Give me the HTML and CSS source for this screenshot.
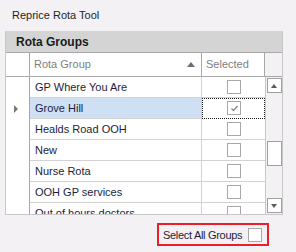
FILE: index.html
```html
<!DOCTYPE html>
<html lang="en">
<head>
    <meta charset="UTF-8">
    <title>Reprice Rota Tool</title>
    <link rel="stylesheet" href="styles.css">
</head>
<body>
    <div class="title">Reprice Rota Tool</div>

    <div class="panel">
        <div class="panel-head">Rota Groups</div>
        <div class="grid">
            <div class="grid-header">
                <div class="ind"></div>
                <div class="col-name">Rota Group<span class="sort"></span></div>
                <div class="col-sel">Selected</div>
                <div class="col-corner"></div>
            </div>
            <div class="grid-body">
                <div class="rows">
                    <div class="row">
                        <div class="ind"></div>
                        <div class="col-name">GP Where You Are</div>
                        <div class="col-sel"><span class="check"></span></div>
                    </div>
                    <div class="row current">
                        <div class="ind"><span class="arrow"></span></div>
                        <div class="col-name">Grove Hill</div>
                        <div class="col-sel focus"><span class="check on"><svg width="11" height="11" viewBox="0 0 11 11"><path d="M2.5 5.5 L4.5 7.5 L8.5 3" fill="none" stroke="#8a8a8a" stroke-width="1.4"/></svg></span></div>
                    </div>
                    <div class="row">
                        <div class="ind"></div>
                        <div class="col-name">Healds Road OOH</div>
                        <div class="col-sel"><span class="check"></span></div>
                    </div>
                    <div class="row">
                        <div class="ind"></div>
                        <div class="col-name">New</div>
                        <div class="col-sel"><span class="check"></span></div>
                    </div>
                    <div class="row">
                        <div class="ind"></div>
                        <div class="col-name">Nurse Rota</div>
                        <div class="col-sel"><span class="check"></span></div>
                    </div>
                    <div class="row">
                        <div class="ind"></div>
                        <div class="col-name">OOH GP services</div>
                        <div class="col-sel"><span class="check"></span></div>
                    </div>
                    <div class="row">
                        <div class="ind"></div>
                        <div class="col-name">Out of hours doctors</div>
                        <div class="col-sel"><span class="check"></span></div>
                    </div>
                </div>
                <div class="scrollbar">
                    <div class="sb-btn"><span class="tri-up"></span></div>
                    <div class="sb-track">
                        <div class="sb-thumb"></div>
                    </div>
                    <div class="sb-btn"><span class="tri-down"></span></div>
                </div>
            </div>
        </div>
    </div>

    <div class="footer">
        <div class="select-all">
            <span class="select-label">Select All Groups</span>
            <span class="check"></span>
        </div>
    </div>
</body>
</html>
```

FILE: styles.css
```css
* {
    box-sizing: border-box;
}
body {
    margin: 0;
    background: #f4f1f5;
    font-family: "Liberation Sans", Arial, sans-serif;
    font-size: 11px;
    color: #1e1e2e;
    width: 296px;
    height: 252px;
    overflow: hidden;
}
.title {
    height: 31px;
    line-height: 30px;
    padding-left: 12px;
    color: #1e1e1e;
}
.panel {
    margin-left: 5px;
    width: 278px;
    height: 184px;
    border: 1px solid #c8c8c8;
    border-top: none;
    display: flex;
    flex-direction: column;
    overflow: hidden;
}
.panel-head {
    height: 22px;
    line-height: 22px;
    background: #d4d4d4;
    font-weight: bold;
    font-size: 12px;
    padding-left: 10px;
    color: #1a1a1a;
    border-bottom: 1px solid #a8a8a8;
}
.grid {
    flex: 1;
    display: flex;
    flex-direction: column;
    background: #fff;
    min-height: 0;
}
.grid-header {
    display: flex;
    height: 24px;
    border-bottom: 1px solid #a8a8a8;
    color: #808080;
}
.grid-header > div {
    line-height: 22px;
}
.ind {
    width: 24px;
    flex: none;
    border-right: 1px solid #a8a8a8;
    background: #fff;
    display: flex;
    align-items: center;
    justify-content: center;
}
.col-name {
    width: 172px;
    flex: none;
    padding-left: 4px;
    border-right: 1px solid #c8c8c8;
    position: relative;
    white-space: nowrap;
}
.grid-header .col-name {
    border-right-color: #a8a8a8;
}
.col-sel {
    width: 63px;
    flex: none;
    padding-left: 4px;
    border-right: 1px solid #a8a8a8;
}
.col-corner {
    flex: 1;
    background: #f4f1f5;
}
.sort {
    position: absolute;
    right: 6px;
    top: 9px;
    border-left: 4px solid transparent;
    border-right: 4px solid transparent;
    border-bottom: 5px solid #6e6e6e;
}
.grid-body {
    flex: 1;
    display: flex;
    min-height: 0;
}
.rows {
    width: 259px;
    overflow: hidden;
}
.row {
    display: flex;
    height: 21px;
}
.row .col-name {
    border-bottom: 1px solid #d2d2d2;
    line-height: 20px;
    padding-left: 5px;
    color: #1c1c3c;
    border-right-color: #d2d2d2;
}
.row .col-sel {
    border-bottom: 1px solid #d2d2d2;
    border-right: none;
    padding-left: 0;
    display: flex;
    align-items: center;
    justify-content: center;
    padding-bottom: 1px;
}
.row.current .col-name {
    background: #cfe0f5;
}
.row .col-sel.focus {
    border: 1px dotted #1a1a1a;
}
.arrow {
    border-top: 4px solid transparent;
    border-bottom: 4px solid transparent;
    border-left: 4px solid #7a7a7a;
    margin-left: -4px;
}
.check {
    display: inline-block;
    flex: none;
    width: 14px;
    height: 14px;
    border: 1px solid #a8a8a8;
    background: #fff;
    position: relative;
}
.check svg {
    position: absolute;
    left: 1px;
    top: 1px;
}
.scrollbar {
    flex: 1;
    background: #f4f1f5;
    border-left: 1px solid #c8c8c8;
    display: flex;
    flex-direction: column;
    align-items: center;
    padding: 1px 0;
}
.sb-btn {
    width: 15px;
    height: 15px;
    border: 1px solid #a0a0a0;
    background: #fff;
    display: flex;
    align-items: center;
    justify-content: center;
    flex: none;
}
.tri-up {
    border-left: 3px solid transparent;
    border-right: 3px solid transparent;
    border-bottom: 4px solid #5a5a5a;
}
.tri-down {
    border-left: 3px solid transparent;
    border-right: 3px solid transparent;
    border-top: 4px solid #5a5a5a;
}
.sb-track {
    flex: 1;
    width: 15px;
    padding-top: 48px;
}
.sb-thumb {
    width: 15px;
    height: 25px;
    border: 1px solid #a0a0a0;
    background: #fff;
}
.footer {
    display: flex;
    justify-content: flex-end;
    padding: 8px 27px 0 0;
}
.select-all {
    display: flex;
    align-items: center;
    gap: 6px;
    height: 23px;
    width: 112px;
    border: 2px solid #e8202a;
    padding-left: 4px;
    color: #1e1e3c;
    white-space: nowrap;
}
.select-label {
    letter-spacing: -0.3px;
}
```
